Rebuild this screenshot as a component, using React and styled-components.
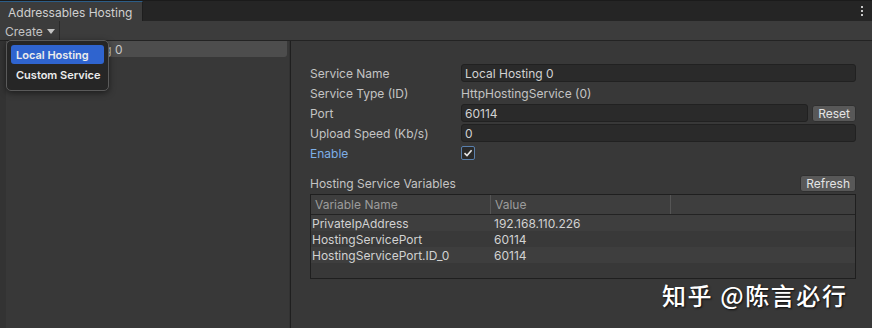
import React from 'react';
import styled, { createGlobalStyle } from 'styled-components';

const GlobalStyle = createGlobalStyle`
  html, body { margin: 0; padding: 0; background: #383838; }
  body { font-family: Inter, "Noto Sans", sans-serif; font-size: 12px; color: #c4c4c4; }
`;

const Window = styled.div`
  position: relative;
  width: 872px;
  height: 328px;
  display: flex;
  flex-direction: column;
  overflow: hidden;
  background: #383838;
`;

const TabBar = styled.div`
  height: 21px;
  display: flex;
  align-items: stretch;
  background: #252525;
  border-top: 1px solid #1b1b1b;
  box-sizing: border-box;
`;

const Tab = styled.div`
  width: 143px;
  display: flex;
  align-items: center;
  padding-left: 8px;
  padding-top: 1px;
  box-sizing: border-box;
  background: #3c3c3c;
  border-top: 1px solid #2c5d87;
  border-right: 1px solid #1e1e1e;
  color: #d0d0d0;
  font-size: 12px;
`;

const TabSpacer = styled.div`
  flex: 1;
`;

const Kebab = styled.div`
  width: 20px;
  display: flex;
  flex-direction: column;
  align-items: center;
  justify-content: center;
  gap: 2px;
  span {
    width: 2px;
    height: 2px;
    background: #c8c8c8;
  }
`;

const Toolbar = styled.div`
  height: 20px;
  display: flex;
  align-items: center;
  background: #3c3c3c;
  border-bottom: 1px solid #232323;
  box-sizing: border-box;
`;

const ToolbarButton = styled.div`
  height: 100%;
  display: flex;
  align-items: center;
  gap: 4px;
  padding: 1px 4px 0 5px;
  box-sizing: border-box;
  border-right: 1px solid #2a2a2a;
  color: #c4c4c4;
  &::after {
    content: '';
    border-left: 4px solid transparent;
    border-right: 4px solid transparent;
    border-top: 5px solid #c4c4c4;
    margin-top: 1px;
  }
`;

const Body = styled.div`
  flex: 1;
  display: flex;
  min-height: 0;
`;

const ListPanel = styled.div`
  width: 290px;
  background: #383838;
  border-left: 6px solid #333333;
  box-sizing: border-box;
  border-right: 1px solid #323232;
`;

const ListRow = styled.div`
  height: 16px;
  margin-right: 2px;
  display: flex;
  align-items: center;
  padding-left: 28px;
  background: ${p => (p.$selected ? '#4d4d4d' : 'transparent')};
  border-radius: 0 0 3px 0;
  color: #c8c8c8;
`;

const DetailPanel = styled.div`
  flex: 1;
  border-left: 1px solid #1f1f1f;
  padding: 22px 16px 0 19px;
  display: flex;
  flex-direction: column;
`;

const FieldRow = styled.div`
  height: 20px;
  display: grid;
  grid-template-columns: 151px 1fr;
  align-items: center;
`;

const Label = styled.div`
  color: ${p => (p.$accent ? '#7eaee6' : '#c4c4c4')};
`;

const Value = styled.div`
  display: flex;
  align-items: center;
  gap: 4px;
  color: #c4c4c4;
`;

const TextField = styled.div`
  flex: 1;
  height: 18px;
  display: flex;
  align-items: center;
  padding-left: 3px;
  box-sizing: border-box;
  background: #2a2a2a;
  border: 1px solid #212121;
  border-radius: 3px;
  color: #d2d2d2;
`;

const Button = styled.div`
  height: 17px;
  display: flex;
  align-items: center;
  padding: 0 5px;
  background: #585858;
  border: 1px solid #303030;
  border-radius: 3px;
  color: #e4e4e4;
  box-sizing: border-box;
`;

const Checkbox = styled.div`
  width: 14px;
  height: 14px;
  box-sizing: border-box;
  border: 1px solid #5a80ad;
  border-radius: 2px;
  background: #2a2a2a;
  display: flex;
  align-items: center;
  justify-content: center;
`;

const SectionHeader = styled.div`
  margin-top: 11px;
  height: 19px;
  display: flex;
  align-items: center;
  justify-content: space-between;
`;

const Table = styled.div`
  margin-top: 1px;
  height: 85px;
  border: 1px solid #1f1f1f;
  box-sizing: border-box;
  background: #383838;
`;

const HeaderRow = styled.div`
  height: 19px;
  display: grid;
  grid-template-columns: 180px 180px 1fr;
  align-items: center;
  background: #3e3e3e;
  border-bottom: 1px solid #232323;
  color: #9c9c9c;
`;

const HeaderCell = styled.div`
  padding-left: 4px;
  height: 100%;
  display: flex;
  align-items: center;
  border-right: ${p => (p.$last ? 'none' : '1px solid #555')};
  box-sizing: border-box;
`;

const DataRow = styled.div`
  height: 16px;
  display: grid;
  grid-template-columns: 182px 1fr;
  align-items: center;
  background: ${p => (p.$odd ? '#3e3e3e' : '#393939')};
  color: #d2d2d2;
  & > div:first-child { padding-left: 1px; }
  & > div:last-child { padding-left: 1px; }
`;

const Popup = styled.div`
  position: absolute;
  left: 6px;
  top: 40px;
  width: 103px;
  height: 51px;
  box-sizing: border-box;
  padding: 4px 4px;
  background: #262626;
  border: 1px solid #5a5a5a;
  border-radius: 5px;
  box-shadow: 0 2px 6px rgba(0, 0, 0, 0.5);
  display: flex;
  flex-direction: column;
  gap: 1px;
`;

const PopupItem = styled.div`
  height: 19px;
  display: flex;
  align-items: center;
  padding-left: 5px;
  border-radius: 3px;
  font-size: 11px;
  font-weight: 600;
  color: #ececec;
  background: ${p => (p.$active ? '#2f64cf' : 'transparent')};
`;

const Watermark = styled.div`
  position: absolute;
  left: 662px;
  top: 277px;
  font-family: "Noto Sans CJK SC", "Noto Sans", sans-serif;
  font-size: 24px;
  font-weight: 500;
  color: #ffffff;
  letter-spacing: 1.6px;
  text-shadow: 1px 1px 2px rgba(0, 0, 0, 0.8);
  white-space: nowrap;
`;

const variables = [
  ['PrivateIpAddress', '192.168.110.226'],
  ['HostingServicePort', '60114'],
  ['HostingServicePort.ID_0', '60114'],
];

export default function App() {
  return (
    <>
      <GlobalStyle />
      <Window>
        <TabBar>
          <Tab>Addressables Hosting</Tab>
          <TabSpacer />
          <Kebab><span /><span /><span /></Kebab>
        </TabBar>
        <Toolbar>
          <ToolbarButton>Create</ToolbarButton>
        </Toolbar>
        <Body>
          <ListPanel>
            <ListRow $selected>Local Hosting 0</ListRow>
          </ListPanel>
          <DetailPanel>
            <FieldRow>
              <Label>Service Name</Label>
              <Value><TextField>Local Hosting 0</TextField></Value>
            </FieldRow>
            <FieldRow>
              <Label>Service Type (ID)</Label>
              <Value>HttpHostingService (0)</Value>
            </FieldRow>
            <FieldRow>
              <Label>Port</Label>
              <Value><TextField>60114</TextField><Button>Reset</Button></Value>
            </FieldRow>
            <FieldRow>
              <Label>Upload Speed (Kb/s)</Label>
              <Value><TextField>0</TextField></Value>
            </FieldRow>
            <FieldRow>
              <Label $accent>Enable</Label>
              <Value>
                <Checkbox>
                  <svg width="10" height="10" viewBox="0 0 10 10">
                    <path d="M1.5 5.2 L4 7.6 L8.6 2.2" fill="none" stroke="#e6e6e6" strokeWidth="1.6" />
                  </svg>
                </Checkbox>
              </Value>
            </FieldRow>
            <SectionHeader>
              <Label>Hosting Service Variables</Label>
              <Button>Refresh</Button>
            </SectionHeader>
            <Table>
              <HeaderRow>
                <HeaderCell>Variable Name</HeaderCell>
                <HeaderCell>Value</HeaderCell>
                <HeaderCell $last />
              </HeaderRow>
              {variables.map(([name, value], i) => (
                <DataRow key={name} $odd={i % 2 === 0}>
                  <div>{name}</div>
                  <div>{value}</div>
                </DataRow>
              ))}
            </Table>
          </DetailPanel>
        </Body>
        <Popup>
          <PopupItem $active>Local Hosting</PopupItem>
          <PopupItem>Custom Service</PopupItem>
        </Popup>
        <Watermark>知乎 @陈言必行</Watermark>
      </Window>
    </>
  );
}
